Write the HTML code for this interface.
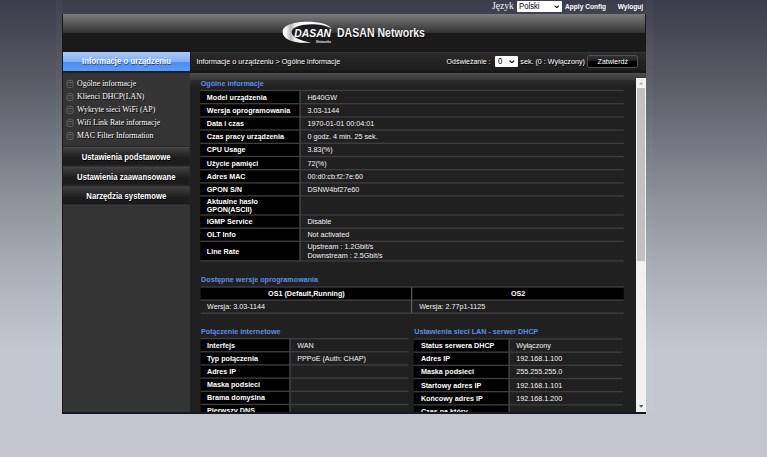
<!DOCTYPE html><html lang="pl"><head><meta charset="utf-8"><title>DASAN Networks</title><style>
*{box-sizing:border-box}
html,body{margin:0;padding:0}
html{background:#c4c6cf}
body{width:767px;height:457px;overflow:hidden;position:relative;
 font-family:"Liberation Sans",sans-serif;font-size:7.2px;color:#fff;
 background:linear-gradient(to bottom,#3c3d4a 0px,#54555f 64px,#61636d 100px,#737580 140px,#8f9199 200px,#a9abb4 264px,#b6b8c1 300px,#c4c6cf 348px,#c4c6cf 457px);}
.abs{position:absolute;white-space:nowrap}
.serif{font-family:"Liberation Serif",serif}
.b{font-weight:bold}
#panel{position:absolute;left:62px;top:14px;width:584px;height:399.5px;background:#181818;}
#hdr{position:absolute;left:.6px;top:-1px;width:582.4px;height:38.6px;background:linear-gradient(to bottom,rgba(138,138,138,0) 0,rgba(138,138,138,0) .5px,#8c8c8c .7px,#7a7a7a 1.5px,#323232 19.9px,#1a1a1a 20.1px,#1a1a1a 100%)}
#tab{position:absolute;left:1px;top:38px;width:127.2px;height:19.3px;background:linear-gradient(to bottom,#aaccfc 0,#7eb0f9 50%,#4c8cf3 52%,#5b9bf8 100%)}
#nav{position:absolute;left:128.8px;top:38px;width:455.2px;height:18px;background:linear-gradient(to bottom,#3e3e3e 0,#2b2b2b 6%,#232323 50%,#1d1d1d 96%,#2a2a2a 100%)}
#side{position:absolute;left:1px;top:57px;width:127.2px;height:341px;background:linear-gradient(to bottom,#1a1a1a 0,#1a1a1a 1.4px,#343434 1.8px,#343434 100%)}
#content{position:absolute;left:128.4px;top:59px;width:455.6px;height:338.6px;background:#202020;overflow:hidden}
#chead{position:absolute;left:0;top:0;width:100%;height:14px;background:linear-gradient(to bottom,#5c5c5c 0,#4a4a4a .6px,#373737 6.8px,#2d2d2d 7px,#202020 13.5px)}
#sb{position:absolute;left:574px;top:64px;width:10px;height:333.8px;background:#f1f1f1}
#thumb{position:absolute;left:1.2px;top:10.3px;width:7.6px;height:172.8px;background:#c1c1c1}
.mi{position:absolute;left:14.1px;font-family:"Liberation Serif",serif;font-size:7.85px;line-height:9px;white-space:nowrap;color:#fff;text-shadow:.6px .6px 0 #000}
.mb{position:absolute;left:0;width:127.2px;height:10px;text-align:center;font-weight:bold;font-size:8.4px;line-height:10px;text-shadow:.6px .6px 0 #000}
.mb span{display:inline-block;transform-origin:50% 50%}
.sec{position:absolute;color:#5b8fe6;font-weight:bold;font-size:7.2px;line-height:9px;white-space:nowrap}
.t{position:absolute;white-space:nowrap;line-height:8.4px;color:#f4f4f4}
.t.b{color:#fff}
</style></head><body>
<div class="abs serif" style="left:492px;top:.3px;font-size:9.6px;line-height:12px;color:#f4f4f4">Język</div>
<div class="abs" style="left:516.6px;top:1px;width:45.4px;height:10.9px;background:#fff;border-radius:.9px;color:#000;font-size:8.3px;line-height:9px;padding:1.2px 0 0 2.8px"><span style="display:inline-block;transform:scaleX(.93);transform-origin:0 50%">Polski</span><svg style="position:absolute;right:2.6px;top:3.7px" width="5.6" height="3.4" viewBox="0 0 9 5.5"><path d="M.9 .9 L4.5 4.4 L8.1 .9" fill="none" stroke="#000" stroke-width="1.8"/></svg></div>
<div class="abs b" style="left:565px;top:2px;font-size:6.6px;line-height:9px;color:#fff">Apply Config</div>
<div class="abs b" style="left:617.7px;top:2px;font-size:6.6px;line-height:9px;color:#fff">Wyloguj</div>
<div class="abs" style="left:56px;top:0;width:6px;height:413.5px;background:rgba(255,255,255,.025)"></div><div class="abs" style="left:646px;top:0;width:6.5px;height:413.5px;background:rgba(255,255,255,.025)"></div>
<div id="panel">
<div id="hdr"></div>
<svg class="abs" style="left:219px;top:6px" width="54" height="25" viewBox="0 0 54 25"><defs><linearGradient id="lg" x1="0" y1="0" x2="1" y2="0"><stop offset="0" stop-color="#fff"/><stop offset=".08" stop-color="#f2f2f2"/><stop offset=".17" stop-color="#b4b4b4"/><stop offset=".24" stop-color="#e6e6e6"/><stop offset=".4" stop-color="#fff"/><stop offset="1" stop-color="#f4f4f4"/></linearGradient></defs><ellipse cx="30.5" cy="12.8" rx="20.3" ry="8.6" fill="#1b1b1b"/><path fill="url(#lg)" d="M1.6 12 C1.6 5 13 1.7 26 1.7 C38 1.7 48 4.4 50.4 8.5 C46.5 5.8 39 4.3 30.5 4.3 C19 4.3 10.7 7.4 10.7 12 C10.7 16.8 18 20.6 30.2 22.4 C15 24.2 1.6 20 1.6 12 Z"/><text x="13.3" y="16.8" style="font-family:'Liberation Sans',sans-serif;font-weight:bold;font-style:italic;font-size:10.5px" fill="#fff" textLength="36.8" lengthAdjust="spacingAndGlyphs">DASAN</text><text x="35" y="22.6" style="font-family:'Liberation Sans',sans-serif;font-weight:bold;font-style:italic;font-size:3.8px" fill="#eee" textLength="15" lengthAdjust="spacingAndGlyphs">Networks</text></svg>
<div class="abs b" style="left:274.5px;top:10.9px;font-size:13px;line-height:16px;color:#f2f2f2;transform:scaleX(.812);transform-origin:0 50%;text-shadow:.6px .6px 0 #000">DASAN Networks</div>
<div id="tab"><div class="abs b" style="left:0;width:127px;text-align:center;top:0;line-height:18.4px;font-size:9px;text-shadow:.6px .6px 0 rgba(0,0,40,.55)"><span style="display:inline-block;transform:scaleX(.862)">Informacje o urządzeniu</span></div></div>
<div id="nav">
<div class="abs" style="left:5.7px;top:5.2px;font-size:7.22px;line-height:9px;text-shadow:.6px .6px 0 #000">Informacje o urządzeniu &gt; Ogólne informacje</div>
<div class="abs" style="left:255.8px;top:5px;font-size:7px;line-height:9px;text-shadow:.6px .6px 0 #000">Odświeżanie :</div>
<div class="abs" style="left:304px;top:3.9px;width:22.9px;height:11px;background:#fff;border-radius:.9px;color:#000;font-size:8.3px;line-height:9px;padding:1.3px 0 0 3.1px"><span style="display:inline-block;transform:scaleX(.93);transform-origin:0 50%">0</span><svg style="position:absolute;right:3px;top:3.9px" width="5.6" height="3.4" viewBox="0 0 9 5.5"><path d="M.9 .9 L4.5 4.4 L8.1 .9" fill="none" stroke="#000" stroke-width="1.8"/></svg></div>
<div class="abs" style="left:329.5px;top:5px;font-size:7.2px;line-height:9px;text-shadow:.6px .6px 0 #000">sek. (0 : Wyłączony)</div>
<div class="abs" style="left:396.7px;top:2.8px;width:50.6px;height:12.8px;background:linear-gradient(to bottom,#343434 0,#1e1e1e 42%,#000 50%,#000 100%);border:.7px solid #505050;border-radius:2.2px;text-align:center;font-size:7px;line-height:11.4px;color:#fff">Zatwierdź</div>
</div>
<div id="side">
<svg class="abs" style="left:3.3px;top:7.70px" width="9" height="10" viewBox="0 0 9 10"><rect x="1.1" y="1.4" width="5.9" height="7.1" rx="1.5" fill="#323232" stroke="#646464" stroke-width="1"/><path d="M2.4 3.4h3.3" stroke="#707070" stroke-width=".9"/><path d="M2.4 5h3.3M2.4 6.5h3.3" stroke="#4e4e4e" stroke-width=".8"/></svg><div class="mi" style="top:8.00px">Ogólne informacje</div>
<svg class="abs" style="left:3.3px;top:20.75px" width="9" height="10" viewBox="0 0 9 10"><rect x="1.1" y="1.4" width="5.9" height="7.1" rx="1.5" fill="#323232" stroke="#646464" stroke-width="1"/><path d="M2.4 3.4h3.3" stroke="#707070" stroke-width=".9"/><path d="M2.4 5h3.3M2.4 6.5h3.3" stroke="#4e4e4e" stroke-width=".8"/></svg><div class="mi" style="top:21.05px">Klienci DHCP(LAN)</div>
<svg class="abs" style="left:3.3px;top:33.80px" width="9" height="10" viewBox="0 0 9 10"><rect x="1.1" y="1.4" width="5.9" height="7.1" rx="1.5" fill="#323232" stroke="#646464" stroke-width="1"/><path d="M2.4 3.4h3.3" stroke="#707070" stroke-width=".9"/><path d="M2.4 5h3.3M2.4 6.5h3.3" stroke="#4e4e4e" stroke-width=".8"/></svg><div class="mi" style="top:34.10px">Wykryte sieci WiFi (AP)</div>
<svg class="abs" style="left:3.3px;top:46.85px" width="9" height="10" viewBox="0 0 9 10"><rect x="1.1" y="1.4" width="5.9" height="7.1" rx="1.5" fill="#323232" stroke="#646464" stroke-width="1"/><path d="M2.4 3.4h3.3" stroke="#707070" stroke-width=".9"/><path d="M2.4 5h3.3M2.4 6.5h3.3" stroke="#4e4e4e" stroke-width=".8"/></svg><div class="mi" style="top:47.15px">Wifi Link Rate informacje</div>
<svg class="abs" style="left:3.3px;top:59.90px" width="9" height="10" viewBox="0 0 9 10"><rect x="1.1" y="1.4" width="5.9" height="7.1" rx="1.5" fill="#323232" stroke="#646464" stroke-width="1"/><path d="M2.4 3.4h3.3" stroke="#707070" stroke-width=".9"/><path d="M2.4 5h3.3M2.4 6.5h3.3" stroke="#4e4e4e" stroke-width=".8"/></svg><div class="mi" style="top:60.20px">MAC Filter Information</div>
<svg class="abs" style="left:0;top:0" width="127.2" height="341" viewBox="0 0 127.2 341"><defs><linearGradient id="mg" x1="0" y1="0" x2="0" y2="1"><stop offset="0" stop-color="#525252"/><stop offset=".05" stop-color="#3e3e3e"/><stop offset=".35" stop-color="#2c2c2c"/><stop offset=".62" stop-color="#1d1d1d"/><stop offset="1" stop-color="#1b1b1b"/></linearGradient></defs><rect x="0" y="75.20" width="126.8" height="0.9" fill="#272727"/><rect x="0" y="76.00" width="126.8" height="18.1" fill="url(#mg)"/><rect x="0" y="93.90" width="126.8" height="2.0" fill="#272727"/><rect x="0" y="95.80" width="126.8" height="18.1" fill="url(#mg)"/><rect x="0" y="113.70" width="126.8" height="2.0" fill="#272727"/><rect x="0" y="115.60" width="126.8" height="18.1" fill="url(#mg)"/><rect x="0" y="133.70" width="126.8" height=".8" fill="#404040"/></svg>
<div class="mb" style="top:80.80px"><span style="transform:scaleX(0.924)">Ustawienia podstawowe</span></div>
<div class="mb" style="top:100.60px"><span style="transform:scaleX(0.924)">Ustawienia zaawansowane</span></div>
<div class="mb" style="top:120.40px"><span style="transform:scaleX(0.924)">Narzędzia systemowe</span></div>
</div>
<div id="content"><div id="chead"></div>
<svg class="abs" style="left:0;top:0" width="455.6" height="339" viewBox="0 0 455.6 339"><rect x="10.30" y="17.50" width="99.70" height="170.40" fill="#000"/><rect x="109.32" y="17.50" width="1.35" height="170.40" fill="#4a4a4a"/><rect x="10.30" y="16.82" width="423.40" height="1.35" fill="#3e3e3e"/><rect x="10.30" y="30.03" width="423.40" height="1.35" fill="#3e3e3e"/><rect x="10.30" y="43.23" width="423.40" height="1.35" fill="#3e3e3e"/><rect x="10.30" y="56.33" width="423.40" height="1.35" fill="#3e3e3e"/><rect x="10.30" y="69.63" width="423.40" height="1.35" fill="#3e3e3e"/><rect x="10.30" y="82.83" width="423.40" height="1.35" fill="#3e3e3e"/><rect x="10.30" y="96.02" width="423.40" height="1.35" fill="#3e3e3e"/><rect x="10.30" y="109.23" width="423.40" height="1.35" fill="#3e3e3e"/><rect x="10.30" y="122.23" width="423.40" height="1.35" fill="#3e3e3e"/><rect x="10.30" y="141.32" width="423.40" height="1.35" fill="#3e3e3e"/><rect x="10.30" y="154.52" width="423.40" height="1.35" fill="#3e3e3e"/><rect x="10.30" y="167.62" width="423.40" height="1.35" fill="#3e3e3e"/><rect x="10.30" y="187.22" width="423.40" height="1.35" fill="#3e3e3e"/><rect x="10.60" y="214.20" width="423.10" height="12.80" fill="#000"/><rect x="10.60" y="213.32" width="423.10" height="1.35" fill="#3e3e3e"/><rect x="10.60" y="226.43" width="423.10" height="1.35" fill="#3e3e3e"/><rect x="10.60" y="239.52" width="423.10" height="1.35" fill="#3e3e3e"/><rect x="220.92" y="214.00" width="1.35" height="26.20" fill="#5a5a5a"/><rect x="10.60" y="265.60" width="89.40" height="79.02" fill="#000"/><rect x="99.32" y="265.60" width="1.35" height="79.02" fill="#4a4a4a"/><rect x="10.60" y="264.93" width="208.00" height="1.35" fill="#3e3e3e"/><rect x="10.60" y="278.10" width="208.00" height="1.35" fill="#3e3e3e"/><rect x="10.60" y="291.26" width="208.00" height="1.35" fill="#3e3e3e"/><rect x="10.60" y="304.44" width="208.00" height="1.35" fill="#3e3e3e"/><rect x="10.60" y="317.61" width="208.00" height="1.35" fill="#3e3e3e"/><rect x="10.60" y="330.78" width="208.00" height="1.35" fill="#3e3e3e"/><rect x="10.60" y="343.94" width="208.00" height="1.35" fill="#3e3e3e"/><rect x="223.80" y="266.00" width="95.30" height="79.02" fill="#000"/><rect x="318.43" y="266.00" width="1.35" height="79.02" fill="#4a4a4a"/><rect x="223.80" y="265.32" width="208.80" height="1.35" fill="#3e3e3e"/><rect x="223.80" y="278.50" width="208.80" height="1.35" fill="#3e3e3e"/><rect x="223.80" y="291.66" width="208.80" height="1.35" fill="#3e3e3e"/><rect x="223.80" y="304.83" width="208.80" height="1.35" fill="#3e3e3e"/><rect x="223.80" y="318.00" width="208.80" height="1.35" fill="#3e3e3e"/><rect x="223.80" y="331.18" width="208.80" height="1.35" fill="#3e3e3e"/><rect x="223.80" y="344.34" width="208.80" height="1.35" fill="#3e3e3e"/></svg>
<div class="sec" style="left:10.30px;top:6.30px">Ogólne informacje</div>
<div class="t b" style="left:16.40px;top:20.60px">Model urządzenia</div>
<div class="t" style="left:117.00px;top:20.60px">H640GW</div>
<div class="t b" style="left:16.40px;top:33.60px">Wersja oprogramowania</div>
<div class="t" style="left:117.00px;top:33.60px">3.03-1144</div>
<div class="t b" style="left:16.40px;top:46.60px">Data i czas</div>
<div class="t" style="left:117.00px;top:46.60px">1970-01-01 00:04:01</div>
<div class="t b" style="left:16.40px;top:59.60px">Czas pracy urządzenia</div>
<div class="t" style="left:117.00px;top:59.60px">0 godz. 4 min. 25 sek.</div>
<div class="t b" style="left:16.40px;top:72.60px">CPU Usage</div>
<div class="t" style="left:117.00px;top:72.60px">3.83(%)</div>
<div class="t b" style="left:16.40px;top:86.60px">Użycie pamięci</div>
<div class="t" style="left:117.00px;top:86.60px">72(%)</div>
<div class="t b" style="left:16.40px;top:99.60px">Adres MAC</div>
<div class="t" style="left:117.00px;top:99.60px">00:d0:cb:f2:7e:60</div>
<div class="t b" style="left:16.40px;top:112.60px">GPON S/N</div>
<div class="t" style="left:117.00px;top:112.60px">DSNW4bf27e60</div>
<div class="t b" style="left:16.40px;top:124.60px">Aktualne hasło</div>
<div class="t b" style="left:16.40px;top:132.60px">GPON(ASCII)</div>
<div class="t b" style="left:16.40px;top:144.60px">IGMP Service</div>
<div class="t" style="left:117.00px;top:144.60px">Disable</div>
<div class="t b" style="left:16.40px;top:157.60px">OLT Info</div>
<div class="t" style="left:117.00px;top:157.60px">Not activated</div>
<div class="t b" style="left:16.40px;top:174.60px">Line Rate</div>
<div class="t" style="left:117.00px;top:169.60px">Upstream : 1.2Gbit/s</div>
<div class="t" style="left:117.00px;top:178.60px">Downstream : 2.5Gbit/s</div>
<div class="sec" style="left:10.70px;top:202.30px">Dostępne wersje oprogramowania</div>
<div class="t b" style="left:10.60px;width:210.80px;text-align:center;top:216.60px">OS1 (Default,Running)</div>
<div class="t b" style="left:222.00px;width:211.60px;text-align:center;top:216.60px">OS2</div>
<div class="t" style="left:16.60px;top:229.60px">Wersja: 3.03-1144</div>
<div class="t" style="left:228.80px;top:229.60px">Wersja: 2.77p1-1125</div>
<div class="sec" style="left:10.70px;top:254.30px">Połączenie internetowe</div>
<div class="t b" style="left:16.60px;top:268.60px">Interfejs</div>
<div class="t" style="left:106.90px;top:268.60px">WAN</div>
<div class="t b" style="left:16.60px;top:281.60px">Typ połączenia</div>
<div class="t" style="left:106.90px;top:281.60px">PPPoE (Auth: CHAP)</div>
<div class="t b" style="left:16.60px;top:294.60px">Adres IP</div>
<div class="t b" style="left:16.60px;top:307.60px">Maska podsieci</div>
<div class="t b" style="left:16.60px;top:320.60px">Brama domyślna</div>
<div class="t b" style="left:16.60px;top:333.60px">Pierwszy DNS</div>
<div class="sec" style="left:223.80px;top:254.30px">Ustawienia sieci LAN - serwer DHCP</div>
<div class="t b" style="left:230.50px;top:268.60px">Status serwera DHCP</div>
<div class="t" style="left:325.80px;top:268.60px">Wyłączony</div>
<div class="t b" style="left:230.50px;top:281.60px">Adres IP</div>
<div class="t" style="left:325.80px;top:281.60px">192.168.1.100</div>
<div class="t b" style="left:230.50px;top:294.60px">Maska podsieci</div>
<div class="t" style="left:325.80px;top:294.60px">255.255.255.0</div>
<div class="t b" style="left:230.50px;top:308.60px">Startowy adres IP</div>
<div class="t" style="left:325.80px;top:308.60px">192.168.1.101</div>
<div class="t b" style="left:230.50px;top:321.60px">Końcowy adres IP</div>
<div class="t" style="left:325.80px;top:321.60px">192.168.1.200</div>
<div class="t b" style="left:230.50px;top:334.60px">Czas na który</div>
</div>
<div id="sb"><div id="thumb"></div><svg style="position:absolute;left:2.9px;top:4px" width="4.2" height="2.6" viewBox="0 0 8 5"><path d="M0 5 L4 0 L8 5 Z" fill="#a8a8a8"/></svg><svg style="position:absolute;left:2.8px;bottom:4px" width="4.4" height="2.7" viewBox="0 0 8 5"><path d="M0 0 L4 5 L8 0 Z" fill="#505050"/></svg></div>
</div>
</body></html>
